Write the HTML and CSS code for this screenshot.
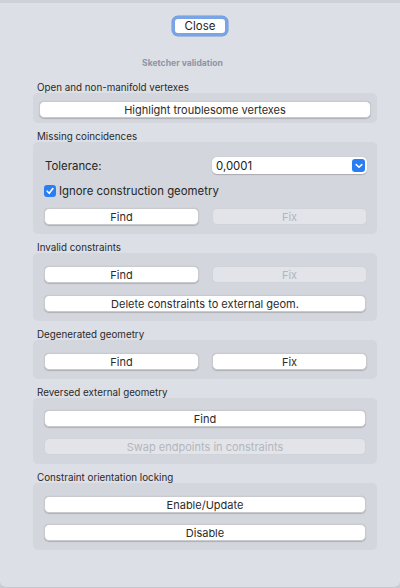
FILE: index.html
```html
<!DOCTYPE html>
<html>
<head>
<meta charset="utf-8">
<link rel="stylesheet" href="styles.css">
</head>
<body>
<div class="window">
  <div class="topbar"></div>
  <div class="close-row"><button class="close-btn"><span>Close</span></button></div>
  <div class="title">Sketcher validation</div>
  <div class="content">
    <div class="label">Open and non-manifold vertexes</div>
    <div class="group g1">
      <button class="btn">Highlight troublesome vertexes</button>
    </div>

    <div class="label">Missing coincidences</div>
    <div class="group g2">
      <div class="row2">
        <div class="tol">Tolerance:</div>
        <div class="combo"><span>0,0001</span><span class="arrow"><svg width="8" height="6" viewBox="0 0 8 6"><path d="M1.2 1.6 L4 4.3 L6.8 1.6" fill="none" stroke="#fff" stroke-width="1.5" stroke-linecap="round" stroke-linejoin="round"/></svg></span></div>
      </div>
      <div class="check-row">
        <span class="checkbox"><svg width="10" height="10" viewBox="0 0 10 10"><path d="M2.2 5.2 L4.2 7.3 L7.9 2.6" fill="none" stroke="#fff" stroke-width="1.6" stroke-linecap="round" stroke-linejoin="round"/></svg></span>
        <span class="check-text">Ignore construction geometry</span>
      </div>
      <div class="row2 mt">
        <button class="btn">Find</button>
        <button class="btn disabled">Fix</button>
      </div>
    </div>

    <div class="label">Invalid constraints</div>
    <div class="group">
      <div class="row2">
        <button class="btn">Find</button>
        <button class="btn disabled">Fix</button>
      </div>
      <button class="btn">Delete constraints to external geom.</button>
    </div>

    <div class="label">Degenerated geometry</div>
    <div class="group">
      <div class="row2">
        <button class="btn">Find</button>
        <button class="btn">Fix</button>
      </div>
    </div>

    <div class="label">Reversed external geometry</div>
    <div class="group g5">
      <button class="btn">Find</button>
      <button class="btn disabled">Swap endpoints in constraints</button>
    </div>

    <div class="label">Constraint orientation locking</div>
    <div class="group g6">
      <button class="btn">Enable/Update</button>
      <button class="btn">Disable</button>
    </div>
  </div>
</div>
</body>
</html>
```
FILE: styles.css
```css
* { box-sizing: border-box; }
html, body { margin: 0; padding: 0; }
body {
  width: 400px;
  height: 588px;
  overflow: hidden;
  font-family: Inter, "Noto Sans", "Liberation Sans", sans-serif;
  background: #c9ccd2;
}
.window {
  width: 400px;
  height: 588px;
  background: #dcdfe5;
  border-radius: 0 0 6px 6px;
  border-bottom: 1px solid #c4c7cd;
  display: flex;
  flex-direction: column;
}
.topbar {
  height: 3px;
  background: #ced1d7;
}
.close-row {
  display: flex;
  justify-content: center;
  padding-top: 13px;
}
.close-btn {
  width: 56px;
  height: 20px;
  padding: 0;
  border: 3px solid #79a5e6;
  border-radius: 6px;
  background: #ffffff;
  font-family: inherit;
  font-size: 11.5px;
  color: #1e1e1e;
  display: flex;
  align-items: center;
  justify-content: center;
  box-shadow: 0 0 0 0.5px #6b98da;
}
.title {
  margin-top: 21px;
  height: 12px;
  line-height: 12px;
  padding-left: 142px;
  font-size: 8.6px;
  font-weight: 700;
  color: #8f94a4;
}
.content {
  margin-left: 33px;
  width: 344px;
  display: flex;
  flex-direction: column;
}
.label {
  height: 12px;
  line-height: 15px;
  margin-top: 6px;
  margin-bottom: 1px;
  padding-left: 4px;
  font-size: 9.8px;
  color: #2a2a2a;
  white-space: nowrap;
}
.content > .label:first-child { margin-top: 11px; }
.group {
  background: #d3d6dc;
  border-radius: 5px;
  padding: 13px 11px 9px;
  display: flex;
  flex-direction: column;
  gap: 12px;
}
.g1 { padding: 8px 6px 5px; }
.g2 { padding-top: 15px; gap: 0; }
.g5, .g6 { gap: 11px; padding-top: 12px; }
.g6 { padding-top: 13px; }
.row2 {
  display: grid;
  grid-template-columns: 155px 155px;
  column-gap: 13px;
  align-items: center;
}
.row2.mt { margin-top: 9px; }
.btn {
  height: 17px;
  padding: 0;
  border: 0.5px solid #c8cace;
  border-radius: 5px;
  background: #ffffff;
  box-shadow: 0 0.5px 1px rgba(0,0,0,0.18);
  font-family: inherit;
  font-size: 11px;
  color: #2b2b2b;
  line-height: 16px;
  text-align: center;
}
.btn.disabled {
  background: #e2e4e9;
  border-color: #d0d3d8;
  box-shadow: none;
  color: #b3b6bc;
}
.tol {
  font-size: 11.4px;
  color: #262626;
  padding-left: 1px;
}
.combo {
  height: 17px;
  background: #ffffff;
  border-radius: 5px;
  box-shadow: 0 0.5px 1px rgba(0,0,0,0.2);
  display: flex;
  align-items: center;
  justify-content: space-between;
  padding: 0 2px 0 4px;
  font-size: 11.4px;
  color: #222;
}
.arrow {
  width: 13px;
  height: 13px;
  border-radius: 3px;
  background: #2a7ef4;
  display: flex;
  align-items: center;
  justify-content: center;
}
.check-row {
  height: 16px;
  margin-top: 9px;
  display: flex;
  align-items: center;
  gap: 3px;
}
.checkbox {
  width: 12px;
  height: 12px;
  border-radius: 3px;
  background: #2a7ef4;
  display: flex;
  align-items: center;
  justify-content: center;
}
.check-text {
  font-size: 11.4px;
  color: #262626;
}
```
